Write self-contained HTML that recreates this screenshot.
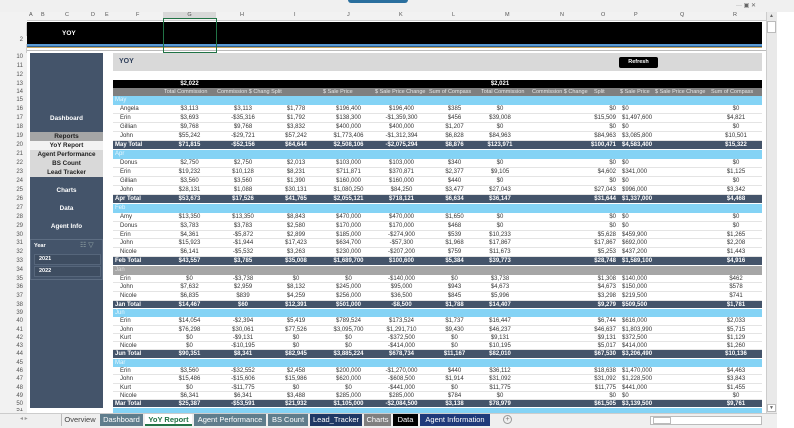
<!DOCTYPE html>
<html><head><meta charset="utf-8"><style>
*{margin:0;padding:0;box-sizing:border-box}
body{width:794px;height:428px;overflow:hidden;background:#fff;font-family:"Liberation Sans",sans-serif;position:relative}
.a{position:absolute}
.rn{position:absolute;left:0;width:27px;text-align:right;padding-right:4px;font-size:6px;color:#555;background:#f2f2f2}
.r{position:absolute;left:113px;width:649px;display:grid;grid-template-columns:50px 53px 54px 52px 53px 53px 53px 54px 55px 27px 38px 55px 52px;font-size:6px;color:#333;border-bottom:1px solid #e4e4e4;overflow:hidden}
.r span{text-align:center;white-space:nowrap;overflow:hidden}
.r span:nth-child(1){text-align:left;padding-left:7px}
.r span:nth-child(8){padding-right:16px}
.r span:nth-child(10){text-align:right;padding-right:1px}
.r span:nth-child(11){text-align:left;padding-left:5px}
.t{background:#44546a;color:#fff;font-weight:bold;border-bottom:1px solid #fff}
.t span:nth-child(1){padding-left:2px}
.m{background:#84d3f5;color:#e8f6fd;border-bottom:none}
.m span:nth-child(1){padding-left:2px}
.j{background:#a6a6a6;color:#ddd}
.sb{position:absolute;left:30px;width:73px;text-align:center;font-size:6.3px;font-weight:bold;color:#fff}
.tab{position:absolute;top:414px;height:12px;font-size:7.5px;line-height:12px;text-align:center;color:#fff}
</style></head><body>
<div class="a" style="left:0;top:0;width:794px;height:12px;background:#f0f0f0"></div>
<div class="a" style="left:348px;top:0;width:60px;height:3px;background:#2a6f9e;border-radius:0 0 3px 3px"></div>
<div class="a" style="left:736px;top:2px;font-size:6px;color:#666">··· ▣ ✕</div>
<div class="a" style="left:0;top:12px;width:766px;height:9px;background:#f2f2f2;border-bottom:1px solid #ccc;font-size:5.5px;color:#555">
<span class="a" style="left:29px">A</span><span class="a" style="left:41px">B</span><span class="a" style="left:65px">C</span><span class="a" style="left:91px">D</span><span class="a" style="left:105px">E</span><span class="a" style="left:136px">F</span>
<span class="a" style="left:163px;width:53px;text-align:center;background:#d8d8d8">G</span><span class="a" style="left:240px">H</span><span class="a" style="left:294px">I</span><span class="a" style="left:347px">J</span><span class="a" style="left:399px">K</span><span class="a" style="left:452px">L</span><span class="a" style="left:505px">M</span><span class="a" style="left:560px">N</span><span class="a" style="left:601px">O</span><span class="a" style="left:634px">P</span><span class="a" style="left:680px">Q</span><span class="a" style="left:733px">R</span></div>
<div class="a" style="left:0;top:21px;width:27px;height:392px;background:#f2f2f2;border-right:1px solid #ccc"></div>
<div class="rn" style="top:20px;height:3px"></div>
<div class="rn" style="top:36px;line-height:8px">2</div>
<div class="rn" style="top:53px;line-height:9px">10</div><div class="rn" style="top:62px;line-height:9px">11</div><div class="rn" style="top:71px;line-height:9px">12</div>
<div class="rn" style="top:80px;line-height:8px">13</div><div class="rn" style="top:88px;line-height:8px">14</div>
<div class="rn" style="top:96px;line-height:9px">15</div><div class="rn" style="top:105px;line-height:9px">16</div><div class="rn" style="top:114px;line-height:9px">17</div><div class="rn" style="top:123px;line-height:9px">18</div><div class="rn" style="top:132px;line-height:9px">19</div><div class="rn" style="top:141px;line-height:9px">20</div><div class="rn" style="top:150px;line-height:9px">21</div><div class="rn" style="top:159px;line-height:9px">22</div><div class="rn" style="top:168px;line-height:9px">23</div><div class="rn" style="top:177px;line-height:9px">24</div><div class="rn" style="top:186px;line-height:9px">25</div><div class="rn" style="top:195px;line-height:9px">26</div>
<div class="rn" style="top:204px;line-height:9px">27</div><div class="rn" style="top:213px;line-height:9px">28</div><div class="rn" style="top:222px;line-height:9px">29</div><div class="rn" style="top:231px;line-height:8px">30</div><div class="rn" style="top:239px;line-height:9px">31</div><div class="rn" style="top:248px;line-height:9px">32</div><div class="rn" style="top:257px;line-height:9px">33</div><div class="rn" style="top:266px;line-height:9px">34</div><div class="rn" style="top:275px;line-height:8px">35</div><div class="rn" style="top:283px;line-height:9px">36</div><div class="rn" style="top:292px;line-height:9px">37</div>
<div class="rn" style="top:301px;line-height:8px">38</div><div class="rn" style="top:309px;line-height:8px">39</div><div class="rn" style="top:317px;line-height:9px">40</div><div class="rn" style="top:326px;line-height:8px">41</div><div class="rn" style="top:334px;line-height:8px">42</div><div class="rn" style="top:342px;line-height:8px">43</div><div class="rn" style="top:350px;line-height:9px">44</div><div class="rn" style="top:359px;line-height:8px">45</div><div class="rn" style="top:367px;line-height:8px">46</div><div class="rn" style="top:375px;line-height:9px">47</div><div class="rn" style="top:384px;line-height:8px">48</div><div class="rn" style="top:392px;line-height:8px">49</div><div class="rn" style="top:400px;line-height:8px">50</div><div class="rn" style="top:408px;line-height:5px;height:5px;overflow:hidden">51</div>
<div class="a" style="left:27px;top:22px;width:735px;height:22px;background:#000"></div>
<div class="a" style="left:62px;top:30px;font-size:6.5px;font-weight:bold;color:#fff">YOY</div>
<div class="a" style="left:27px;top:44px;width:735px;height:2px;background:#5b9bd5"></div>
<div class="a" style="left:27px;top:46px;width:735px;height:1px;background:#2e5f8f"></div>
<div class="a" style="left:27px;top:47px;width:735px;height:1px;background:#c9a55c"></div>
<div class="a" style="left:27px;top:50px;width:739px;height:1px;background:#bbb"></div>
<div class="a" style="left:163px;top:18px;width:54px;height:35px;border:1px solid #217346"></div>
<div class="a" style="left:30px;top:53px;width:73px;height:355px;background:#44546a"></div>
<div class="a" style="left:30px;top:132px;width:73px;height:9px;background:#a6a6a6"></div>
<div class="a" style="left:30px;top:141px;width:73px;height:9px;background:#f2f2f2"></div>
<div class="a" style="left:30px;top:150px;width:73px;height:27px;background:#d9d9d9"></div>
<div class="sb" style="top:114px;line-height:9px">Dashboard</div>
<div class="sb" style="top:132px;line-height:9px;color:#222;font-size:6.5px">Reports</div>
<div class="sb" style="top:141px;line-height:9px;color:#222">YoY Report</div>
<div class="sb" style="top:150px;line-height:9px;color:#222">Agent Performance</div>
<div class="sb" style="top:159px;line-height:9px;color:#222">BS Count</div>
<div class="sb" style="top:168px;line-height:9px;color:#222">Lead Tracker</div>
<div class="sb" style="top:186px;line-height:9px">Charts</div>
<div class="sb" style="top:204px;line-height:9px">Data</div>
<div class="sb" style="top:222px;line-height:9px">Agent Info</div>
<div class="a" style="left:30px;top:239px;width:73px;height:41px;border:1px solid #5d6d82"></div>
<div class="a" style="left:34px;top:243px;font-size:5.5px;font-weight:bold;color:#fff">Year</div>
<div class="a" style="left:80px;top:241px;font-size:7px;color:#9aa">☷ ▽</div>
<div class="a" style="left:34px;top:254px;width:67px;height:11px;background:#3e4d61;border:1px solid #56667b;font-size:5.5px;font-weight:bold;color:#fff;padding-left:4px;line-height:9px">2021</div>
<div class="a" style="left:34px;top:266px;width:67px;height:11px;background:#3e4d61;border:1px solid #56667b;font-size:5.5px;font-weight:bold;color:#fff;padding-left:4px;line-height:9px">2022</div>
<div class="a" style="left:113px;top:53px;width:649px;height:18px;background:#d9d9d9"></div>
<div class="a" style="left:119px;top:58px;font-size:7px;font-weight:bold;color:#2f3f5a">YOY</div>
<div class="a" style="left:619px;top:57px;width:39px;height:11px;background:#000;border-radius:2px;color:#fff;font-size:5.5px;font-weight:bold;text-align:center;line-height:11px">Refresh</div>
<div class="r" style="top:80px;height:8px;line-height:8px;background:#000;color:#fff;font-weight:bold;border:none"><span></span><span>$2,022</span><span></span><span></span><span></span><span></span><span></span><span>$2,021</span><span></span><span></span><span></span><span></span><span></span></div>
<div class="a" style="left:113px;top:88px;width:649px;height:8px;background:#7f7f7f;font-size:5.5px;color:#e6e6e6;line-height:8px;white-space:nowrap">
<span class="a" style="left:51px">Total Commission</span><span class="a" style="left:104px">Commission $ Chang Split</span><span class="a" style="left:210px">$ Sale Price</span><span class="a" style="left:262px">$ Sale Price Change</span><span class="a" style="left:316px">Sum of Compass</span><span class="a" style="left:368px">Total Commission</span><span class="a" style="left:419px">Commission $ Change</span><span class="a" style="left:481px">Split</span><span class="a" style="left:507px">$ Sale Price</span><span class="a" style="left:542px">$ Sale Price Change</span><span class="a" style="left:598px">Sum of Compass</span></div>

<div class="r m" style="top:96px;height:9px;line-height:9px"><span>May</span></div>
<div class="r" style="top:105px;height:9px;line-height:9px"><span>Angela</span><span>$3,113</span><span>$3,113</span><span>$1,778</span><span>$196,400</span><span>$196,400</span><span>$385</span><span>$0</span><span></span><span>$0</span><span>$0</span><span></span><span>$0</span></div>
<div class="r" style="top:114px;height:9px;line-height:9px"><span>Erin</span><span>$3,693</span><span>-$35,316</span><span>$1,792</span><span>$138,300</span><span>-$1,359,300</span><span>$456</span><span>$39,008</span><span></span><span>$15,509</span><span>$1,497,600</span><span></span><span>$4,821</span></div>
<div class="r" style="top:123px;height:9px;line-height:9px"><span>Gillian</span><span>$9,768</span><span>$9,768</span><span>$3,832</span><span>$400,000</span><span>$400,000</span><span>$1,207</span><span>$0</span><span></span><span>$0</span><span>$0</span><span></span><span>$0</span></div>
<div class="r" style="top:132px;height:9px;line-height:9px"><span>John</span><span>$55,242</span><span>-$29,721</span><span>$57,242</span><span>$1,773,406</span><span>-$1,312,394</span><span>$6,828</span><span>$84,963</span><span></span><span>$84,963</span><span>$3,085,800</span><span></span><span>$10,501</span></div>
<div class="r t" style="top:141px;height:9px;line-height:9px"><span>May Total</span><span>$71,815</span><span>-$52,156</span><span>$64,644</span><span>$2,508,106</span><span>-$2,075,294</span><span>$8,876</span><span>$123,971</span><span></span><span>$100,471</span><span>$4,583,400</span><span></span><span>$15,322</span></div>

<div class="r m" style="top:150px;height:9px;line-height:9px"><span>Apr</span></div>
<div class="r" style="top:159px;height:9px;line-height:9px"><span>Donus</span><span>$2,750</span><span>$2,750</span><span>$2,013</span><span>$103,000</span><span>$103,000</span><span>$340</span><span>$0</span><span></span><span>$0</span><span>$0</span><span></span><span>$0</span></div>
<div class="r" style="top:168px;height:9px;line-height:9px"><span>Erin</span><span>$19,232</span><span>$10,128</span><span>$8,231</span><span>$711,871</span><span>$370,871</span><span>$2,377</span><span>$9,105</span><span></span><span>$4,602</span><span>$341,000</span><span></span><span>$1,125</span></div>
<div class="r" style="top:177px;height:9px;line-height:9px"><span>Gillian</span><span>$3,560</span><span>$3,560</span><span>$1,390</span><span>$160,000</span><span>$160,000</span><span>$440</span><span>$0</span><span></span><span>$0</span><span>$0</span><span></span><span>$0</span></div>
<div class="r" style="top:186px;height:9px;line-height:9px"><span>John</span><span>$28,131</span><span>$1,088</span><span>$30,131</span><span>$1,080,250</span><span>$84,250</span><span>$3,477</span><span>$27,043</span><span></span><span>$27,043</span><span>$996,000</span><span></span><span>$3,342</span></div>
<div class="r t" style="top:195px;height:9px;line-height:9px"><span>Apr Total</span><span>$53,673</span><span>$17,526</span><span>$41,765</span><span>$2,055,121</span><span>$718,121</span><span>$6,634</span><span>$36,147</span><span></span><span>$31,644</span><span>$1,337,000</span><span></span><span>$4,468</span></div>

<div class="r m" style="top:204px;height:9px;line-height:9px"><span>Feb</span></div>
<div class="r" style="top:213px;height:9px;line-height:9px"><span>Amy</span><span>$13,350</span><span>$13,350</span><span>$8,843</span><span>$470,000</span><span>$470,000</span><span>$1,650</span><span>$0</span><span></span><span>$0</span><span>$0</span><span></span><span>$0</span></div>
<div class="r" style="top:222px;height:9px;line-height:9px"><span>Donus</span><span>$3,783</span><span>$3,783</span><span>$2,580</span><span>$170,000</span><span>$170,000</span><span>$468</span><span>$0</span><span></span><span>$0</span><span>$0</span><span></span><span>$0</span></div>
<div class="r" style="top:231px;height:8px;line-height:8px"><span>Erin</span><span>$4,361</span><span>-$5,872</span><span>$2,899</span><span>$185,000</span><span>-$274,900</span><span>$539</span><span>$10,233</span><span></span><span>$5,628</span><span>$459,900</span><span></span><span>$1,265</span></div>
<div class="r" style="top:239px;height:9px;line-height:9px"><span>John</span><span>$15,923</span><span>-$1,944</span><span>$17,423</span><span>$634,700</span><span>-$57,300</span><span>$1,968</span><span>$17,867</span><span></span><span>$17,867</span><span>$692,000</span><span></span><span>$2,208</span></div>
<div class="r" style="top:248px;height:9px;line-height:9px"><span>Nicole</span><span>$6,141</span><span>-$5,532</span><span>$3,263</span><span>$230,000</span><span>-$207,200</span><span>$759</span><span>$11,673</span><span></span><span>$5,253</span><span>$437,200</span><span></span><span>$1,443</span></div>
<div class="r t" style="top:257px;height:9px;line-height:9px"><span>Feb Total</span><span>$43,557</span><span>$3,785</span><span>$35,008</span><span>$1,689,700</span><span>$100,600</span><span>$5,384</span><span>$39,773</span><span></span><span>$28,748</span><span>$1,589,100</span><span></span><span>$4,916</span></div>

<div class="r m j" style="top:266px;height:9px;line-height:9px"><span>Jan</span></div>
<div class="r" style="top:275px;height:8px;line-height:8px"><span>Erin</span><span>$0</span><span>-$3,738</span><span>$0</span><span>$0</span><span>-$140,000</span><span>$0</span><span>$3,738</span><span></span><span>$1,308</span><span>$140,000</span><span></span><span>$462</span></div>
<div class="r" style="top:283px;height:9px;line-height:9px"><span>John</span><span>$7,632</span><span>$2,959</span><span>$8,132</span><span>$245,000</span><span>$95,000</span><span>$943</span><span>$4,673</span><span></span><span>$4,673</span><span>$150,000</span><span></span><span>$578</span></div>
<div class="r" style="top:292px;height:9px;line-height:9px"><span>Nicole</span><span>$6,835</span><span>$839</span><span>$4,259</span><span>$256,000</span><span>$36,500</span><span>$845</span><span>$5,996</span><span></span><span>$3,298</span><span>$219,500</span><span></span><span>$741</span></div>
<div class="r t" style="top:301px;height:8px;line-height:8px"><span>Jan Total</span><span>$14,467</span><span>$60</span><span>$12,391</span><span>$501,000</span><span>-$8,500</span><span>$1,788</span><span>$14,407</span><span></span><span>$9,279</span><span>$509,500</span><span></span><span>$1,781</span></div>

<div class="r m" style="top:309px;height:8px;line-height:8px"><span>Jun</span></div>
<div class="r" style="top:317px;height:9px;line-height:9px"><span>Erin</span><span>$14,054</span><span>-$2,394</span><span>$5,419</span><span>$789,524</span><span>$173,524</span><span>$1,737</span><span>$16,447</span><span></span><span>$6,744</span><span>$616,000</span><span></span><span>$2,033</span></div>
<div class="r" style="top:326px;height:8px;line-height:8px"><span>John</span><span>$76,298</span><span>$30,061</span><span>$77,526</span><span>$3,095,700</span><span>$1,291,710</span><span>$9,430</span><span>$46,237</span><span></span><span>$46,637</span><span>$1,803,990</span><span></span><span>$5,715</span></div>
<div class="r" style="top:334px;height:8px;line-height:8px"><span>Kurt</span><span>$0</span><span>-$9,131</span><span>$0</span><span>$0</span><span>-$372,500</span><span>$0</span><span>$9,131</span><span></span><span>$9,131</span><span>$372,500</span><span></span><span>$1,129</span></div>
<div class="r" style="top:342px;height:8px;line-height:8px"><span>Nicole</span><span>$0</span><span>-$10,195</span><span>$0</span><span>$0</span><span>-$414,000</span><span>$0</span><span>$10,195</span><span></span><span>$5,017</span><span>$414,000</span><span></span><span>$1,260</span></div>
<div class="r t" style="top:350px;height:9px;line-height:9px"><span>Jun Total</span><span>$90,351</span><span>$8,341</span><span>$82,945</span><span>$3,885,224</span><span>$678,734</span><span>$11,167</span><span>$82,010</span><span></span><span>$67,530</span><span>$3,206,490</span><span></span><span>$10,136</span></div>

<div class="r m" style="top:359px;height:8px;line-height:8px"><span>Mar</span></div>
<div class="r" style="top:367px;height:8px;line-height:8px"><span>Erin</span><span>$3,560</span><span>-$32,552</span><span>$2,458</span><span>$200,000</span><span>-$1,270,000</span><span>$440</span><span>$36,112</span><span></span><span>$18,638</span><span>$1,470,000</span><span></span><span>$4,463</span></div>
<div class="r" style="top:375px;height:9px;line-height:9px"><span>John</span><span>$15,486</span><span>-$15,606</span><span>$15,986</span><span>$620,000</span><span>-$608,500</span><span>$1,914</span><span>$31,092</span><span></span><span>$31,092</span><span>$1,228,500</span><span></span><span>$3,843</span></div>
<div class="r" style="top:384px;height:8px;line-height:8px"><span>Kurt</span><span>$0</span><span>-$11,775</span><span>$0</span><span>$0</span><span>-$441,000</span><span>$0</span><span>$11,775</span><span></span><span>$11,775</span><span>$441,000</span><span></span><span>$1,455</span></div>
<div class="r" style="top:392px;height:8px;line-height:8px"><span>Nicole</span><span>$6,341</span><span>$6,341</span><span>$3,488</span><span>$285,000</span><span>$285,000</span><span>$784</span><span>$0</span><span></span><span>$0</span><span>$0</span><span></span><span>$0</span></div>
<div class="r t" style="top:400px;height:8px;line-height:8px"><span>Mar Total</span><span>$25,387</span><span>-$53,591</span><span>$21,932</span><span>$1,105,000</span><span>-$2,084,500</span><span>$3,138</span><span>$78,979</span><span></span><span>$61,505</span><span>$3,139,500</span><span></span><span>$9,761</span></div>
<div class="r m" style="top:408px;height:5px;line-height:5px"><span></span></div>

<div class="a" style="left:766px;top:12px;width:11px;height:401px;background:#e9e9e9;border-left:1px solid #ccc"></div>
<div class="a" style="left:767px;top:21px;width:9px;height:12px;background:#fff;border:1px solid #bbb"></div>
<div class="a" style="left:767px;top:13px;width:9px;height:7px;font-size:5px;text-align:center;color:#666">▲</div>
<div class="a" style="left:767px;top:404px;width:9px;height:8px;font-size:5px;text-align:center;color:#666;background:#fff;border:1px solid #bbb">▼</div>
<div class="a" style="left:777px;top:12px;width:17px;height:416px;background:#fff"></div>

<div class="a" style="left:0;top:413px;width:777px;height:15px;background:#efefef;border-top:1px solid #ccc"></div>
<div class="a" style="left:20px;top:415px;font-size:6px;color:#999">◂ ▸</div>
<div class="tab" style="left:61px;width:37px;color:#444;border-left:1px solid #bbb">Overview</div>
<div class="tab" style="left:100px;width:43px;background:#5f7d8c">Dashboard</div>
<div class="tab" style="left:145px;width:47px;background:#fff;color:#217346;font-weight:bold;border-bottom:2px solid #217346">YoY Report</div>
<div class="tab" style="left:194px;width:72px;background:#5f7d8c">Agent Performance</div>
<div class="tab" style="left:268px;width:40px;background:#5f7d8c">BS Count</div>
<div class="tab" style="left:310px;width:52px;background:#1f3864">Lead_Tracker</div>
<div class="tab" style="left:364px;width:27px;background:#7f7f7f">Charts</div>
<div class="tab" style="left:393px;width:25px;background:#000">Data</div>
<div class="tab" style="left:420px;width:70px;background:#1f3a7a">Agent Information</div>
<div class="a" style="left:503px;top:415px;width:9px;height:9px;border:1px solid #999;border-radius:50%;font-size:7px;line-height:7px;text-align:center;color:#777">+</div>
<div class="a" style="left:650px;top:416px;width:112px;height:9px;background:#fff;border:1px solid #bbb"></div>
<div class="a" style="left:653px;top:417px;width:18px;height:7px;border:1px solid #bbb"></div>
</body></html>
